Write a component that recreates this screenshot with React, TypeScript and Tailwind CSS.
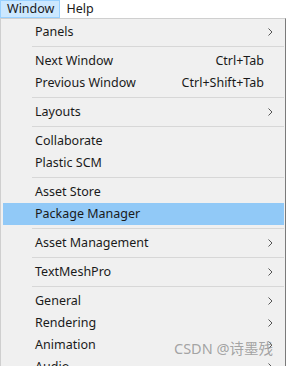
import React from "react";

type Item =
  | { kind: "item"; label: string; shortcut?: string; sub?: boolean; active?: boolean }
  | { kind: "sep" };

const ITEMS: Item[] = [
  { kind: "item", label: "Panels", sub: true },
  { kind: "sep" },
  { kind: "item", label: "Next Window", shortcut: "Ctrl+Tab" },
  { kind: "item", label: "Previous Window", shortcut: "Ctrl+Shift+Tab" },
  { kind: "sep" },
  { kind: "item", label: "Layouts", sub: true },
  { kind: "sep" },
  { kind: "item", label: "Collaborate" },
  { kind: "item", label: "Plastic SCM" },
  { kind: "sep" },
  { kind: "item", label: "Asset Store" },
  { kind: "item", label: "Package Manager", active: true },
  { kind: "sep" },
  { kind: "item", label: "Asset Management", sub: true },
  { kind: "sep" },
  { kind: "item", label: "TextMeshPro", sub: true },
  { kind: "sep" },
  { kind: "item", label: "General", sub: true },
  { kind: "item", label: "Rendering", sub: true },
  { kind: "item", label: "Animation", sub: true },
  { kind: "item", label: "Audio", sub: true },
];

function Chevron() {
  return (
    <svg width="5" height="8" viewBox="0 0 5 8" className="shrink-0">
      <polyline points="0.5,0.5 4,4 0.5,7.5" fill="none" stroke="#555" strokeWidth="1" />
    </svg>
  );
}

export default function App() {
  return (
    <div
      className="relative w-[288px] h-[366px] overflow-hidden bg-white text-[12.5px] text-[#1a1a1a]"
      style={{ fontFamily: '"Noto Sans", "Noto Sans CJK SC", sans-serif' }}
    >
      {/* Menu bar */}
      <div className="flex h-[18px] items-center bg-white">
        <div className="flex h-full items-center border border-[#99d1ff] bg-[#cce8ff] pl-[6px] pr-[5px] leading-none">
          Window
        </div>
        <div className="flex h-full items-center pl-[6px] leading-none">Help</div>
      </div>

      {/* Dropdown */}
      <div className="flex w-[286px] flex-col border border-[#cfcfcf] border-r-[#7a7a7a] bg-[#f0f0f0] pt-[2px] pl-[2px] pr-[1px]">
        {ITEMS.map((it, i) =>
          it.kind === "sep" ? (
            <div key={i} className="flex h-[7px] items-center pl-[29px]">
              <div className="h-px w-full bg-[#d7d7d7]" />
            </div>
          ) : (
            <div
              key={i}
              className={`flex h-[22px] items-center pl-[32px] pr-[11px] ${it.active ? "bg-[#91c9f7]" : ""}`}
            >
              <span className="flex-1 whitespace-nowrap">{it.label}</span>
              {it.shortcut && <span className="mr-[9px] whitespace-nowrap">{it.shortcut}</span>}
              {it.sub && <Chevron />}
            </div>
          )
        )}
      </div>

      {/* Watermark */}
      <div className="pointer-events-none absolute left-[174px] top-[341px] text-[14.5px] leading-none text-[#9a9a9a]/90">
        CSDN @诗墨残
      </div>
    </div>
  );
}
